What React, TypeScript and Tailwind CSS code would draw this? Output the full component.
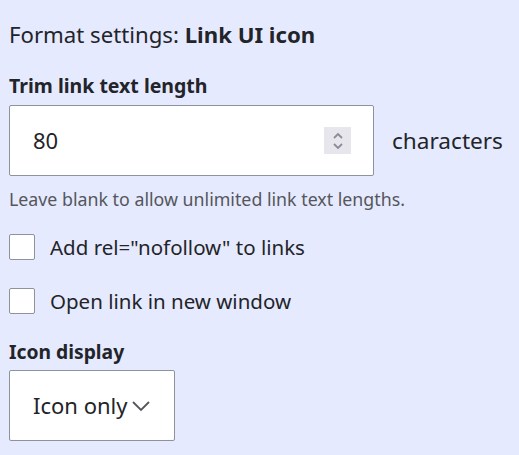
export default function App() {
  return (
    <div className="min-h-screen w-full bg-[#e5eafe] px-[9px] pt-[20px] text-[#232429] font-['Noto_Sans',sans-serif]">
      <h2 className="text-[22.2px] leading-[30px]">
        Format settings: <span className="font-bold">Link UI icon</span>
      </h2>

      <div className="mt-[24px] text-[19.5px] leading-[24px] font-bold">Trim link text length</div>
      <div className="mt-[7px] flex items-center gap-[18px]">
        <div className="flex h-[71px] w-[365px] items-center justify-between rounded-[2px] border border-[#8e929c] bg-white pl-[23px] pr-[22px]">
          <span className="text-[22px]">80</span>
          <div className="flex h-[27px] w-[27px] flex-col items-center justify-center bg-[#e6e6ec]">
            <svg width="12" height="20" viewBox="0 0 12 20" fill="none" stroke="#8c8c99" strokeWidth="1.8">
              <path d="M2 7 L6 3 L10 7" />
              <path d="M2 13 L6 17 L10 13" />
            </svg>
          </div>
        </div>
        <span className="text-[22.6px]">characters</span>
      </div>
      <p className="mt-[12px] text-[17.8px] leading-[22px] text-[#55565b]">
        Leave blank to allow unlimited link text lengths.
      </p>

      <div className="mt-[24px] flex flex-col gap-[28px]">
        <label className="flex items-center gap-[15px] text-[20.5px] leading-[26px]">
          <span className="h-[26px] w-[26px] shrink-0 rounded-[2px] border border-[#8e929c] bg-white" />
          Add rel="nofollow" to links
        </label>
        <label className="flex items-center gap-[15px] text-[20.5px] leading-[26px]">
          <span className="h-[26px] w-[26px] shrink-0 rounded-[2px] border border-[#8e929c] bg-white" />
          Open link in new window
        </label>
      </div>

      <div className="mt-[26px] text-[19.3px] leading-[24px] font-bold">Icon display</div>
      <div className="mt-[6px] flex h-[71px] w-[166px] items-center rounded-[2px] border border-[#8e929c] bg-white pl-[23px]">
        <span className="text-[22px]">Icon only</span>
        <svg className="ml-[4px]" width="20" height="12" viewBox="0 0 20 12" fill="none" stroke="#55565b" strokeWidth="1.8">
          <path d="M2 2 L10 10 L18 2" />
        </svg>
      </div>
    </div>
  );
}
